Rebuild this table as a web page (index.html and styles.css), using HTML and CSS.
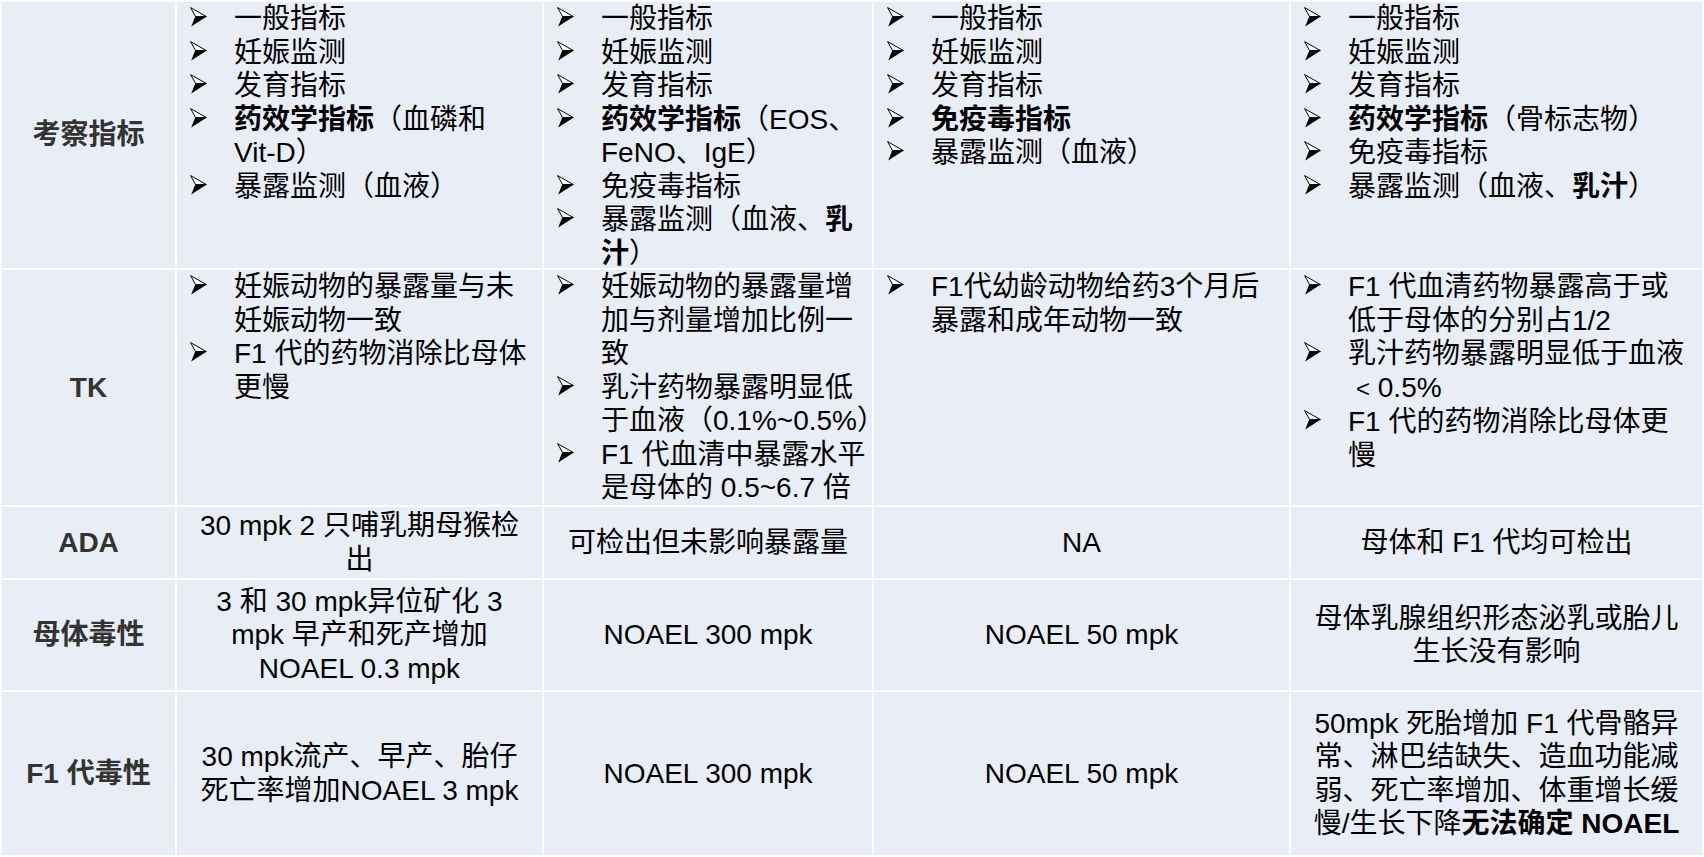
FILE: index.html
```html
<!DOCTYPE html>
<html lang="zh-CN">
<head>
<meta charset="utf-8">
<title>考察指标对比</title>
<link rel="stylesheet" href="styles.css">
</head>
<body>
<svg width="0" height="0" class="defs" aria-hidden="true">
  <symbol id="arr" viewBox="0 0 17 20">
    <polygon points="0.6,0.6 16.4,9.6 5.6,9.6" fill="#fff" stroke="#000" stroke-width="1" stroke-linejoin="miter"/>
    <polygon points="5.2,9.4 16.8,9.4 1.2,19.6" fill="#000"/>
  </symbol>
</svg>
<div class="table">
  <!-- Row 1 -->
  <div class="cell head">考察指标</div>
  <div class="cell list">
    <div class="item"><span class="mark"><svg class="arrow"><use href="#arr"/></svg></span><span class="txt">一般指标</span></div>
    <div class="item"><span class="mark"><svg class="arrow"><use href="#arr"/></svg></span><span class="txt">妊娠监测</span></div>
    <div class="item"><span class="mark"><svg class="arrow"><use href="#arr"/></svg></span><span class="txt">发育指标</span></div>
    <div class="item"><span class="mark"><svg class="arrow"><use href="#arr"/></svg></span><span class="txt"><b>药效学指标</b>（血磷和<br>Vit-D）</span></div>
    <div class="item"><span class="mark"><svg class="arrow"><use href="#arr"/></svg></span><span class="txt">暴露监测（血液）</span></div>
  </div>
  <div class="cell list">
    <div class="item"><span class="mark"><svg class="arrow"><use href="#arr"/></svg></span><span class="txt">一般指标</span></div>
    <div class="item"><span class="mark"><svg class="arrow"><use href="#arr"/></svg></span><span class="txt">妊娠监测</span></div>
    <div class="item"><span class="mark"><svg class="arrow"><use href="#arr"/></svg></span><span class="txt">发育指标</span></div>
    <div class="item"><span class="mark"><svg class="arrow"><use href="#arr"/></svg></span><span class="txt"><b>药效学指标</b>（EOS、<br>FeNO、IgE）</span></div>
    <div class="item"><span class="mark"><svg class="arrow"><use href="#arr"/></svg></span><span class="txt">免疫毒指标</span></div>
    <div class="item"><span class="mark"><svg class="arrow"><use href="#arr"/></svg></span><span class="txt">暴露监测（血液、<b>乳</b><br><b>汁</b>）</span></div>
  </div>
  <div class="cell list">
    <div class="item"><span class="mark"><svg class="arrow"><use href="#arr"/></svg></span><span class="txt">一般指标</span></div>
    <div class="item"><span class="mark"><svg class="arrow"><use href="#arr"/></svg></span><span class="txt">妊娠监测</span></div>
    <div class="item"><span class="mark"><svg class="arrow"><use href="#arr"/></svg></span><span class="txt">发育指标</span></div>
    <div class="item"><span class="mark"><svg class="arrow"><use href="#arr"/></svg></span><span class="txt"><b>免疫毒指标</b></span></div>
    <div class="item"><span class="mark"><svg class="arrow"><use href="#arr"/></svg></span><span class="txt">暴露监测（血液）</span></div>
  </div>
  <div class="cell list">
    <div class="item"><span class="mark"><svg class="arrow"><use href="#arr"/></svg></span><span class="txt">一般指标</span></div>
    <div class="item"><span class="mark"><svg class="arrow"><use href="#arr"/></svg></span><span class="txt">妊娠监测</span></div>
    <div class="item"><span class="mark"><svg class="arrow"><use href="#arr"/></svg></span><span class="txt">发育指标</span></div>
    <div class="item"><span class="mark"><svg class="arrow"><use href="#arr"/></svg></span><span class="txt"><b>药效学指标</b>（骨标志物）</span></div>
    <div class="item"><span class="mark"><svg class="arrow"><use href="#arr"/></svg></span><span class="txt">免疫毒指标</span></div>
    <div class="item"><span class="mark"><svg class="arrow"><use href="#arr"/></svg></span><span class="txt">暴露监测（血液、<b>乳汁</b>）</span></div>
  </div>

  <!-- Row 2 -->
  <div class="cell head">TK</div>
  <div class="cell list">
    <div class="item"><span class="mark"><svg class="arrow"><use href="#arr"/></svg></span><span class="txt">妊娠动物的暴露量与未<br>妊娠动物一致</span></div>
    <div class="item"><span class="mark"><svg class="arrow"><use href="#arr"/></svg></span><span class="txt">F1 代的药物消除比母体<br>更慢</span></div>
  </div>
  <div class="cell list">
    <div class="item"><span class="mark"><svg class="arrow"><use href="#arr"/></svg></span><span class="txt">妊娠动物的暴露量增<br>加与剂量增加比例一<br>致</span></div>
    <div class="item"><span class="mark"><svg class="arrow"><use href="#arr"/></svg></span><span class="txt">乳汁药物暴露明显低<br>于血液（0.1%~0.5%）</span></div>
    <div class="item"><span class="mark"><svg class="arrow"><use href="#arr"/></svg></span><span class="txt">F1 代血清中暴露水平<br>是母体的 0.5~6.7 倍</span></div>
  </div>
  <div class="cell list">
    <div class="item"><span class="mark"><svg class="arrow"><use href="#arr"/></svg></span><span class="txt">F1代幼龄动物给药3个月后<br>暴露和成年动物一致</span></div>
  </div>
  <div class="cell list">
    <div class="item"><span class="mark"><svg class="arrow"><use href="#arr"/></svg></span><span class="txt">F1 代血清药物暴露高于或<br>低于母体的分别占1/2</span></div>
    <div class="item"><span class="mark"><svg class="arrow"><use href="#arr"/></svg></span><span class="txt">乳汁药物暴露明显低于血液<br><span class="lt">&lt;</span> 0.5%</span></div>
    <div class="item"><span class="mark"><svg class="arrow"><use href="#arr"/></svg></span><span class="txt">F1 代的药物消除比母体更<br>慢</span></div>
  </div>

  <!-- Row 3 -->
  <div class="cell head">ADA</div>
  <div class="cell center"><span class="ctext">30 mpk 2 只哺乳期母猴检<br>出</span></div>
  <div class="cell center"><span class="ctext">可检出但未影响暴露量</span></div>
  <div class="cell center"><span class="ctext">NA</span></div>
  <div class="cell center"><span class="ctext">母体和 F1 代均可检出</span></div>

  <!-- Row 4 -->
  <div class="cell head">母体毒性</div>
  <div class="cell center"><span class="ctext">3 和 30 mpk异位矿化 3<br>mpk 早产和死产增加<br>NOAEL 0.3 mpk</span></div>
  <div class="cell center"><span class="ctext">NOAEL 300 mpk</span></div>
  <div class="cell center"><span class="ctext">NOAEL 50 mpk</span></div>
  <div class="cell center"><span class="ctext">母体乳腺组织形态泌乳或胎儿<br>生长没有影响</span></div>

  <!-- Row 5 -->
  <div class="cell head">F1 代毒性</div>
  <div class="cell center"><span class="ctext">30 mpk流产、早产、胎仔<br>死亡率增加NOAEL 3 mpk</span></div>
  <div class="cell center"><span class="ctext">NOAEL 300 mpk</span></div>
  <div class="cell center"><span class="ctext">NOAEL 50 mpk</span></div>
  <div class="cell center"><span class="ctext">50mpk 死胎增加 F1 代骨骼异<br>常、淋巴结缺失、造血功能减<br>弱、死亡率增加、体重增长缓<br>慢/生长下降<b>无法确定 NOAEL</b></span></div>
</div>
</body>
</html>
```

FILE: styles.css
```css
html, body {
  margin: 0;
  padding: 0;
  background: #ffffff;
}

body {
  font-family: "Liberation Sans", "Noto Sans CJK SC", sans-serif;
  font-size: 28px;
  line-height: 33.5px;
  color: #000000;
}

.defs {
  position: absolute;
  width: 0;
  height: 0;
  overflow: hidden;
}

.table {
  display: grid;
  grid-template-columns: 173px 365px 328px 415px 411px;
  grid-template-rows: 266px 235px 71px 110px 163px;
  gap: 2px;
  padding: 2px;
  width: 1704px;
  height: 857px;
  box-sizing: border-box;
  background: #ffffff;
}

.cell {
  background: #e9edf5;
  min-width: 0;
  overflow: visible;
}

.head {
  display: flex;
  align-items: center;
  justify-content: center;
  font-weight: 700;
  color: #333333;
  white-space: nowrap;
}

.list {
  padding: 0 4px 0 13px;
  display: flex;
  flex-direction: column;
}

.item {
  display: flex;
  align-items: flex-start;
}

.mark {
  flex: 0 0 44px;
  height: 33.5px;
  box-sizing: border-box;
  padding-top: 5px;
  display: flex;
  align-items: flex-start;
}

.arrow {
  width: 17px;
  height: 20px;
  display: block;
}

.txt {
  white-space: nowrap;
}

.lt {
  display: inline-block;
  padding-left: 8px;
  font-size: 24px;
}

.center {
  display: flex;
  align-items: center;
  justify-content: center;
}

.ctext {
  display: block;
  text-align: center;
  white-space: nowrap;
}

b {
  font-weight: 700;
}
```
